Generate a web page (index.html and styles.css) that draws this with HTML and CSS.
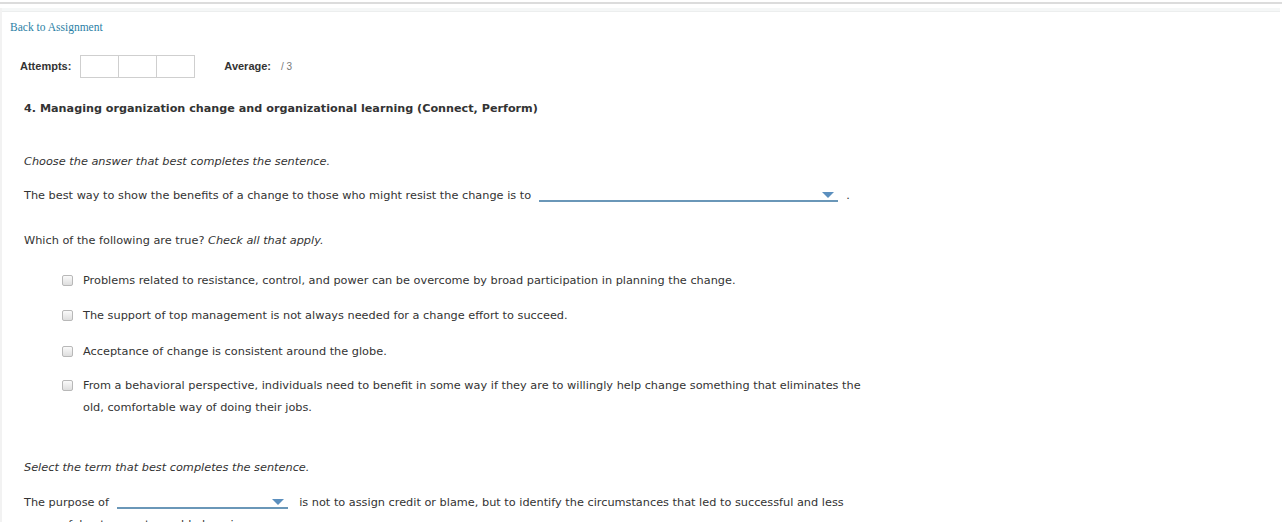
FILE: index.html
```html
<!DOCTYPE html>
<html>
<head>
<meta charset="utf-8">
<link rel="stylesheet" href="styles.css">
</head>
<body>
<div class="topline"></div>
<div class="panel">
  <div class="band"></div>
  <div class="content">
    <a class="back" href="#">Back to Assignment</a>
    <div class="attempts">
      <span class="lbl">Attempts:</span>
      <div class="boxes"><span class="box"></span><span class="box"></span><span class="box"></span></div>
      <span class="lbl avg">Average:</span>
      <span class="score">/ 3</span>
    </div>
    <h2 class="title">4. Managing organization change and organizational learning (Connect, Perform)</h2>

    <p class="instr first">Choose the answer that best completes the sentence.</p>
    <p class="sentence">The best way to show the benefits of a change to those who might resist the change is to <span class="select wide"><span class="arrow"></span></span> .</p>

    <p class="q">Which of the following are true? <i>Check all that apply.</i></p>
    <ul class="checks">
      <li><span class="cb"></span><span class="txt">Problems related to resistance, control, and power can be overcome by broad participation in planning the change.</span></li>
      <li><span class="cb"></span><span class="txt">The support of top management is not always needed for a change effort to succeed.</span></li>
      <li><span class="cb"></span><span class="txt">Acceptance of change is consistent around the globe.</span></li>
      <li><span class="cb"></span><span class="txt">From a behavioral perspective, individuals need to benefit in some way if they are to willingly help change something that eliminates the old, comfortable way of doing their jobs.</span></li>
    </ul>

    <p class="instr second">Select the term that best completes the sentence.</p>
    <p class="sentence last">The purpose of <span class="select narrow"><span class="arrow"></span></span> is not to assign credit or blame, but to identify the circumstances that led to successful and less successful outcomes to enable learning.</p>
  </div>
</div>
</body>
</html>
```

FILE: styles.css
```css
html, body {
  margin: 0;
  padding: 0;
  background: #fff;
}
body {
  font-family: "DejaVu Sans", Verdana, sans-serif;
  font-size: 11.3px;
  color: #333;
  overflow: hidden;
  height: 522px;
}
.topline {
  height: 2px;
  margin-top: 2px;
  background: #dcdcdc;
}
.panel {
  margin-top: 4px;
  border-left: 2px solid #f2f2f2;
  margin-right: 2px;
  min-height: 600px;
}
.band {
  height: 3px;
  background: #f5f7f7;
  border-bottom: 1px solid #eceeee;
}
.content {
  padding: 8px 0 0 8px;
}
.back {
  display: block;
  font-family: "Liberation Serif", "Times New Roman", serif;
  font-size: 11.5px;
  color: #2c7fa6;
  text-decoration: none;
  line-height: 14px;
}
.attempts {
  display: flex;
  align-items: center;
  margin-top: 20px;
  padding-left: 10px;
  height: 24px;
}
.lbl {
  font-family: "Liberation Sans", Arial, sans-serif;
  font-weight: bold;
  font-size: 11px;
  color: #333;
}
.boxes {
  display: flex;
  margin-left: 9px;
}
.box {
  width: 37px;
  height: 21px;
  border: 1px solid #cfcfcf;
  margin-left: -1px;
}
.box:first-child { margin-left: 0; }
.avg {
  margin-left: 29px;
}
.score {
  font-family: "Liberation Sans", Arial, sans-serif;
  font-size: 10px;
  color: #777;
  margin-left: 10px;
}
.title {
  margin: 23px 0 0 14px;
  font-size: 11.2px;
  font-weight: bold;
  line-height: 16px;
  color: #333;
}
p {
  margin: 0;
  padding-left: 14px;
  line-height: 16px;
}
.instr {
  font-style: italic;
}
.instr.first { margin-top: 37px; }
.sentence { margin-top: 18px; }
.select {
  display: inline-block;
  position: relative;
  vertical-align: -3px;
  height: 10px;
  border-bottom: 2px solid #6a97b8;
  margin-left: 4px;
  margin-right: 5px;
}
.select.wide { width: 299px; }
.select.narrow { width: 171px; margin-left: 4px; margin-right: 8px; }
.arrow {
  position: absolute;
  right: 4px;
  top: 2px;
  width: 0;
  height: 0;
  border-left: 6px solid transparent;
  border-right: 6px solid transparent;
  border-top: 6px solid #5b8fbe;
}
.q { margin-top: 29px; }
.checks {
  list-style: none;
  margin: 21px 0 0 0;
  padding: 0 0 0 52px;
  width: 812px;
}
.checks li {
  display: flex;
  align-items: flex-start;
  line-height: 22px;
  margin-bottom: 13px;
}
.checks li:nth-child(2) { margin-bottom: 14px; }
.checks li:nth-child(3) { margin-bottom: 12px; }
.cb {
  flex: none;
  width: 9px;
  height: 9px;
  border: 1px solid #b8b8b8;
  border-radius: 2px;
  background: linear-gradient(#fafafa, #dedede);
  margin-top: 5px;
  margin-right: 10px;
}
.txt { flex: 1; }
.instr.second { margin-top: 41px; }
.sentence.last { margin-top: 16px; width: 840px; line-height: 22px; }
```
